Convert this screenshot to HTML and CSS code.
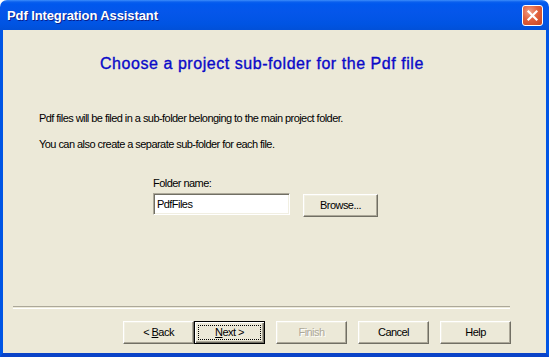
FILE: index.html
```html
<!DOCTYPE html>
<html>
<head>
<meta charset="utf-8">
<link rel="stylesheet" href="styles.css">
</head>
<body>
<div class="window">
  <div class="titlebar">
    <span class="title">Pdf Integration Assistant</span>
    <span class="close">
      <svg width="13" height="13" viewBox="0 0 13 13"><path d="M2.5 2.5 L10.5 10.5 M10.5 2.5 L2.5 10.5" stroke="#fff" stroke-width="2.2" stroke-linecap="square"/></svg>
    </span>
  </div>
  <div class="frame">
    <div class="content">
      <div class="main">
        <h1 class="heading">Choose a project sub-folder for the Pdf file</h1>
        <p class="text first">Pdf files will be filed in a sub-folder belonging to the main project folder.</p>
        <p class="text second">You can also create a separate sub-folder for each file.</p>
        <div class="folder">
          <div class="label">Folder name:</div>
          <div class="row">
            <div class="input">PdfFiles</div>
            <div class="btn browse"><span>Browse...</span></div>
          </div>
        </div>
      </div>
      <div class="footer">
        <div class="sep"></div>
        <div class="buttons">
          <div class="btn"><span>&lt; <u>B</u>ack</span></div>
          <div class="btn default"><span class="focus"><span><u>N</u>ext &gt;</span></span></div>
          <div class="btn disabled gap"><span>Finish</span></div>
          <div class="btn gap"><span>Cancel</span></div>
          <div class="btn gap"><span>Help</span></div>
        </div>
      </div>
    </div>
  </div>
</div>
</body>
</html>
```

FILE: styles.css
```css
html, body {
  margin: 0;
  padding: 0;
  background: #ffffff;
}
body {
  font-family: "Liberation Sans", Arial, sans-serif;
  font-size: 11px;
  letter-spacing: -0.55px;
  color: #000;
}
.window {
  width: 549px;
  height: 357px;
  display: flex;
  flex-direction: column;
}
.titlebar {
  height: 30px;
  flex: none;
  border-radius: 7px 7px 0 0;
  background: linear-gradient(#3c8dfb 0px, #0a5fee 2px, #0058ee 4px, #0556ea 12px, #0054e3 24px, #0150d8 30px);
  display: flex;
  align-items: center;
  justify-content: space-between;
  padding: 0 6px 0 7px;
  box-sizing: border-box;
}
.title {
  color: #fff;
  font-family: "Liberation Sans", Arial, sans-serif;
  font-weight: bold;
  font-size: 13px;
  letter-spacing: -0.1px;
  text-shadow: 1px 1px 0 #0a1e8a;
}
.close {
  width: 19px;
  height: 19px;
  border: 1px solid #fff;
  border-radius: 3px;
  background: radial-gradient(circle at 35% 30%, #f0a088 0%, #e2613d 45%, #c8441f 100%);
  display: flex;
  align-items: center;
  justify-content: center;
  margin-top: 1px;
}
.close svg { display: block; }
.frame {
  flex: 1;
  display: flex;
  border-left: 3px solid #0055e5;
  border-right: 3px solid #0055e5;
  border-bottom: 4px solid #0a43c8;
  background: #ece9d8;
}
.content {
  flex: 1;
  display: flex;
  flex-direction: column;
}
.main {
  flex: 1;
}
.heading {
  margin: 25px 0 0 97px;
  font-size: 16px;
  line-height: 18px;
  font-weight: normal;
  letter-spacing: 0.55px;
  -webkit-text-stroke: 0.35px #0a0ac8;
  color: #0a0ac8;
}
.text {
  margin: 0 0 0 36px;
  line-height: 13px;
}
.first { margin-top: 39px; }
.second { margin-top: 13px; }
.folder {
  margin: 26px 0 0 150px;
}
.label {
  line-height: 13px;
}
.row {
  display: flex;
  align-items: flex-start;
  margin-top: 3px;
  gap: 13px;
}
.input {
  width: 137px;
  height: 22px;
  box-sizing: border-box;
  background: #fff;
  border: 1px solid;
  border-color: #aca899 #fff #fff #aca899;
  box-shadow: inset 1px 1px 0 #716f64, inset -1px -1px 0 #f1efe2;
  padding: 4px 0 0 3px;
  line-height: 13px;
}
.btn {
  width: 71px;
  height: 23px;
  flex: none;
  box-sizing: border-box;
  border: 1px solid;
  border-color: #fff #716f64 #716f64 #fff;
  box-shadow: inset -1px -1px 0 #aca899, inset 1px 1px 0 #f1efe2;
  background: #ece9d8;
  display: flex;
  align-items: center;
  justify-content: center;
  line-height: 13px;
}
.browse {
  width: 75px;
  margin-top: 1px;
}
.footer {
  flex: none;
}
.sep {
  margin-left: 10px;
  width: 497px;
  height: 1px;
  border-top: 1px solid #aca899;
  border-bottom: 1px solid #fff;
}
.buttons {
  display: flex;
  margin: 12px 0 9px 120px;
}
.gap { margin-left: 11px; }
.btn.default {
  border: 1px solid #000;
  box-shadow: inset 1px 1px 0 #fff, inset -1px -1px 0 #716f64, inset -2px -2px 0 #aca899;
}
.focus {
  display: flex;
  align-items: center;
  justify-content: center;
  width: 63px;
  height: 15px;
  box-sizing: border-box;
  border: 1px dotted #000;
}
.disabled {
  color: #aca899;
  text-shadow: 1px 1px 0 #fff;
}
u { text-decoration: underline; text-underline-offset: 1px; }
```
